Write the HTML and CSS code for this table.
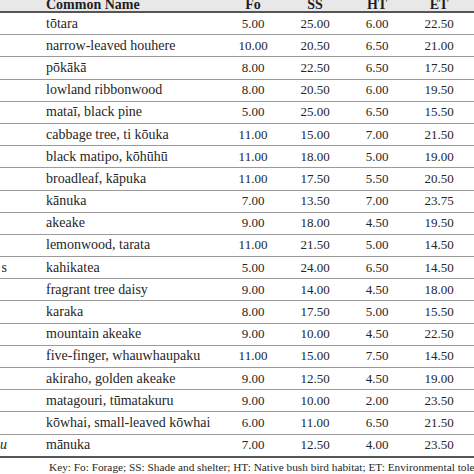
FILE: index.html
```html
<!DOCTYPE html>
<html>
<head>
<meta charset="utf-8">
<link rel="stylesheet" href="styles.css">
</head>
<body>
<div class="page">
  <table class="tbl">
    <colgroup>
      <col class="c-sci"><col class="c-name"><col class="c-num"><col class="c-num"><col class="c-num"><col class="c-num"><col class="c-rest">
    </colgroup>
    <thead>
      <tr>
        <th class="sci"></th>
        <th class="name">Common Name</th>
        <th>Fo</th><th>SS</th><th>HT</th><th>ET</th><th></th>
      </tr>
    </thead>
    <tbody>
      <tr><td class="sci"></td><td class="name">tōtara</td><td>5.00</td><td>25.00</td><td>6.00</td><td>22.50</td><td></td></tr>
      <tr><td class="sci"></td><td class="name">narrow-leaved houhere</td><td>10.00</td><td>20.50</td><td>6.50</td><td>21.00</td><td></td></tr>
      <tr><td class="sci"></td><td class="name">pōkākā</td><td>8.00</td><td>22.50</td><td>6.50</td><td>17.50</td><td></td></tr>
      <tr><td class="sci"></td><td class="name">lowland ribbonwood</td><td>8.00</td><td>20.50</td><td>6.00</td><td>19.50</td><td></td></tr>
      <tr><td class="sci"></td><td class="name">mataī, black pine</td><td>5.00</td><td>25.00</td><td>6.50</td><td>15.50</td><td></td></tr>
      <tr><td class="sci"></td><td class="name">cabbage tree, ti kōuka</td><td>11.00</td><td>15.00</td><td>7.00</td><td>21.50</td><td></td></tr>
      <tr><td class="sci"></td><td class="name">black matipo, kōhūhū</td><td>11.00</td><td>18.00</td><td>5.00</td><td>19.00</td><td></td></tr>
      <tr><td class="sci"></td><td class="name">broadleaf, kāpuka</td><td>11.00</td><td>17.50</td><td>5.50</td><td>20.50</td><td></td></tr>
      <tr><td class="sci"></td><td class="name">kānuka</td><td>7.00</td><td>13.50</td><td>7.00</td><td>23.75</td><td></td></tr>
      <tr><td class="sci"></td><td class="name">akeake</td><td>9.00</td><td>18.00</td><td>4.50</td><td>19.50</td><td></td></tr>
      <tr><td class="sci"></td><td class="name">lemonwood, tarata</td><td>11.00</td><td>21.50</td><td>5.00</td><td>14.50</td><td></td></tr>
      <tr><td class="sci"><div class="clip">s</div></td><td class="name">kahikatea</td><td>5.00</td><td>24.00</td><td>6.50</td><td>14.50</td><td></td></tr>
      <tr><td class="sci"></td><td class="name">fragrant tree daisy</td><td>9.00</td><td>14.00</td><td>4.50</td><td>18.00</td><td></td></tr>
      <tr><td class="sci"></td><td class="name">karaka</td><td>8.00</td><td>17.50</td><td>5.00</td><td>15.50</td><td></td></tr>
      <tr><td class="sci"></td><td class="name">mountain akeake</td><td>9.00</td><td>10.00</td><td>4.50</td><td>22.50</td><td></td></tr>
      <tr><td class="sci"></td><td class="name">five-finger, whauwhaupaku</td><td>11.00</td><td>15.00</td><td>7.50</td><td>14.50</td><td></td></tr>
      <tr><td class="sci"></td><td class="name">akiraho, golden akeake</td><td>9.00</td><td>12.50</td><td>4.50</td><td>19.00</td><td></td></tr>
      <tr><td class="sci"></td><td class="name">matagouri, tūmatakuru</td><td>9.00</td><td>10.00</td><td>2.00</td><td>23.50</td><td></td></tr>
      <tr><td class="sci"></td><td class="name">kōwhai, small-leaved kōwhai</td><td>6.00</td><td>11.00</td><td>6.50</td><td>21.50</td><td></td></tr>
      <tr class="last"><td class="sci"><div class="clip it">u</div></td><td class="name">mānuka</td><td>7.00</td><td>12.50</td><td>4.00</td><td>23.50</td><td></td></tr>
    </tbody>
  </table>
  <p class="key">Key: Fo: Forage; SS: Shade and shelter; HT: Native bush bird habitat; ET: Environmental tolerance.</p>
</div>
</body>
</html>
```
FILE: styles.css
```css
html, body {
  margin: 0;
  padding: 0;
  background: #fff;
}
body {
  width: 474px;
  height: 474px;
  overflow: hidden;
  font-family: "Liberation Serif", "Times New Roman", serif;
  color: #262626;
}
.page {
  margin-top: -7px;
}
.tbl {
  border-collapse: collapse;
  table-layout: fixed;
  width: 474px;
}
.c-sci { width: 38px; }
.c-name { width: 184px; }
.c-num { width: 62px; }
.c-rest { width: 4px; }
.tbl th {
  background: #e8e8e8;
  font-weight: bold;
  font-size: 14px;
  line-height: 13px;
  height: 18px;
  padding: 0;
  vertical-align: bottom;
  text-align: center;
  border-bottom: 2px solid #555;
  color: #1e1e1e;
}
.tbl td {
  height: 21.2px;
  padding: 0;
  font-size: 13px;
  text-align: center;
  border-bottom: 1px solid #9a9a9a;
  white-space: nowrap;
}
.tbl th.name, .tbl td.name {
  text-align: left;
  padding-left: 8px;
  font-size: 14px;
}
.tbl tr.last td {
  border-bottom: 2px solid #555;
}
.clip {
  width: 7px;
  overflow: hidden;
  display: flex;
  justify-content: flex-end;
  white-space: nowrap;
  font-size: 14px;
}
.it { font-style: italic; }
.key {
  margin: 3px 0 0 49px;
  font-size: 11.3px;
  white-space: nowrap;
  color: #262626;
}
```
